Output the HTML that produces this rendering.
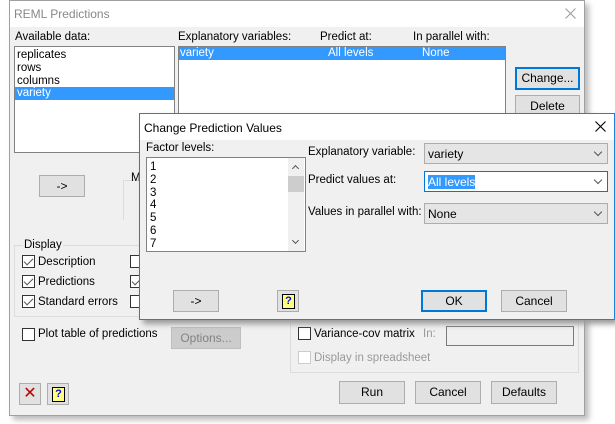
<!DOCTYPE html>
<html><head><meta charset="utf-8"><style>
*{box-sizing:border-box}
body{margin:0;width:615px;height:424px;background:#fff;font-family:"Liberation Sans",sans-serif;font-size:11px;color:#000;position:relative;overflow:hidden}
.a{position:absolute}
.win{background:#f0f0f0;border:1px solid #a0a0a0}
.btn{position:absolute;background:#e1e1e1;border:1px solid #adadad;text-align:center;font-size:12px;line-height:20px}
.lb{position:absolute;background:#fff;border:1px solid #828282}
.cb{position:absolute;width:13px;height:13px;border:1px solid #333;background:#fff}
.t{position:absolute;font-size:11.5px;white-space:nowrap}
.grp{position:absolute;border:1px solid #dcdcdc}
.combo{position:absolute;background:#e5e5e5;border:1px solid #adadad;font-size:12px;padding:3px 0 0 3px}
.chev{position:absolute;right:6px;top:5px;width:6px;height:6px;border-right:1px solid #555;border-bottom:1px solid #555;transform:rotate(45deg)}
.chk:after{content:"";position:absolute;left:3px;top:0px;width:4px;height:8px;border-right:1.5px solid #555;border-bottom:1.5px solid #555;transform:rotate(45deg)}
.help{position:absolute;width:22px;height:22px;background:#e1e1e1;border:1px solid #adadad}
.help span{position:absolute;left:4px;top:3px;width:13px;height:15px;background:#ffff80;border:1px solid #000;font-size:11px;font-weight:bold;color:#00f;text-align:center;line-height:13px}
</style></head><body>
<div class="a" style="left:13px;top:4px;width:576px;height:416px;background:#bbb;filter:blur(3px)"></div>
<div class="a win" style="left:9px;top:0;width:576px;height:416px">
 <div class="a" style="left:0;top:0;width:574px;height:26px;background:#fff"></div>
 <div class="t" style="left:4px;top:6px;font-size:12px;color:#888">REML Predictions</div>
 <svg class="a" style="left:555px;top:7px" width="11" height="11"><path d="M0.5 0.5L10.5 10.5M10.5 0.5L0.5 10.5" stroke="#999" stroke-width="1"/></svg>
</div>
<div class="t" style="left:15px;top:31px">Available data:</div>
<div class="lb" style="left:14px;top:46px;width:161px;height:107px"></div>
<div class="t" style="left:17px;top:49px">replicates</div>
<div class="t" style="left:17px;top:62px">rows</div>
<div class="t" style="left:17px;top:75px">columns</div>
<div class="a" style="left:15px;top:87px;width:159px;height:13px;background:#3399ff"></div>
<div class="t" style="left:17px;top:87px;color:#fff">variety</div>
<div class="t" style="left:178px;top:31px">Explanatory variables:</div>
<div class="t" style="left:320px;top:31px">Predict at:</div>
<div class="t" style="left:413px;top:31px">In parallel with:</div>
<div class="lb" style="left:178px;top:46px;width:328px;height:80px"></div>
<div class="a" style="left:179px;top:47px;width:326px;height:13px;background:#3399ff"></div>
<div class="t" style="left:180px;top:47px;color:#fff">variety</div>
<div class="t" style="left:328px;top:47px;color:#fff">All levels</div>
<div class="t" style="left:422px;top:47px;color:#fff">None</div>
<div class="btn" style="left:515px;top:67px;width:65px;height:23px;border:2px solid #0078d7;line-height:19px">Change...</div>
<div class="btn" style="left:515px;top:95px;width:65px;height:23px">Delete</div>
<div class="btn" style="left:39px;top:175px;width:46px;height:22px">-&gt;</div>
<div class="grp" style="left:123px;top:180px;width:20px;height:40px;border-right:none;border-bottom:none"></div>
<div class="t" style="left:131px;top:172px">M</div>
<div class="grp" style="left:14px;top:245px;width:140px;height:72px"></div>
<div class="t" style="left:23px;top:239px;background:#f0f0f0;padding:0 1px">Display</div>
<div class="cb chk" style="left:22px;top:255px"></div><div class="t" style="left:38px;top:256px">Description</div>
<div class="cb chk" style="left:22px;top:275px"></div><div class="t" style="left:38px;top:276px">Predictions</div>
<div class="cb chk" style="left:22px;top:295px"></div><div class="t" style="left:38px;top:296px">Standard errors</div>
<div class="cb" style="left:130px;top:255px"></div>
<div class="cb chk" style="left:130px;top:275px"></div>
<div class="cb" style="left:130px;top:295px"></div>
<div class="cb" style="left:22px;top:328px"></div><div class="t" style="left:38px;top:328px">Plot table of predictions</div>
<div class="btn" style="left:171px;top:327px;width:70px;height:22px;background:#ccc;border-color:#bfbfbf;color:#838383">Options...</div>
<div class="grp" style="left:290px;top:300px;width:289px;height:73px;border-top:none"></div>
<div class="lb" style="left:446px;top:300px;width:128px;height:20px;background:#f0f0f0;border-color:#7a7a7a"></div>
<div class="cb" style="left:298px;top:327px"></div><div class="t" style="left:314px;top:328px">Variance-cov matrix</div>
<div class="t" style="left:423px;top:328px;color:#999">In:</div>
<div class="lb" style="left:446px;top:326px;width:128px;height:20px;background:#f0f0f0;border-color:#7a7a7a"></div>
<div class="cb" style="left:298px;top:351px;border-color:#ccc"></div><div class="t" style="left:314px;top:352px;color:#999">Display in spreadsheet</div>
<div class="btn" style="left:19px;top:383px;width:22px;height:22px;color:#b00;font-size:16px;line-height:19px">✕</div>
<div class="help" style="left:47px;top:383px"><span>?</span></div>
<div class="btn" style="left:339px;top:381px;width:66px;height:23px">Run</div>
<div class="btn" style="left:415px;top:381px;width:66px;height:23px">Cancel</div>
<div class="btn" style="left:491px;top:381px;width:66px;height:23px">Defaults</div>

<div class="a" style="left:143px;top:117px;width:475px;height:207px;background:#999;filter:blur(3px)"></div>
<div class="a" style="left:139px;top:113px;width:476px;height:207px;background:#f0f0f0;border:1px solid #1883d7">
 <div class="a" style="left:0;top:0;width:474px;height:26px;background:#fff"></div>
 <div class="t" style="left:4px;top:7px;font-size:12px">Change Prediction Values</div>
 <svg class="a" style="left:455px;top:7px" width="11" height="11"><path d="M0.5 0.5L10.5 10.5M10.5 0.5L0.5 10.5" stroke="#000" stroke-width="1.1"/></svg>
</div>
<div class="t" style="left:146px;top:142px">Factor levels:</div>
<div class="lb" style="left:146px;top:157px;width:160px;height:95px"></div>
<div class="a" style="left:288px;top:158px;width:16px;height:93px;background:#f0f0f0"></div>
<div class="a" style="left:288px;top:176px;width:16px;height:16px;background:#cdcdcd"></div>
<div class="a" style="left:293px;top:166px;width:5px;height:5px;border-left:1px solid #555;border-top:1px solid #555;transform:rotate(45deg)"></div>
<div class="a" style="left:293px;top:238px;width:5px;height:5px;border-right:1px solid #555;border-bottom:1px solid #555;transform:rotate(45deg)"></div>
<div class="t" style="left:150px;top:161px;font-size:11.5px;line-height:12.8px">1<br>2<br>3<br>4<br>5<br>6<br>7</div>
<div class="t" style="left:308px;top:146px">Explanatory variable:</div>
<div class="combo" style="left:424px;top:143px;width:184px;height:21px">variety<div class="chev"></div></div>
<div class="t" style="left:308px;top:174px">Predict values at:</div>
<div class="combo" style="left:424px;top:171px;width:184px;height:21px;background:#fff;border-color:#0078d7"><span style="background:#3399ff;color:#fff">All levels</span><div class="chev"></div></div>
<div class="t" style="left:308px;top:206px">Values in parallel with:</div>
<div class="combo" style="left:424px;top:203px;width:184px;height:21px">None<div class="chev"></div></div>
<div class="btn" style="left:173px;top:290px;width:46px;height:22px">-&gt;</div>
<div class="help" style="left:277px;top:290px"><span>?</span></div>
<div class="btn" style="left:421px;top:290px;width:66px;height:22px;border:2px solid #0078d7;line-height:18px">OK</div>
<div class="btn" style="left:501px;top:290px;width:66px;height:22px">Cancel</div>
</body></html>
